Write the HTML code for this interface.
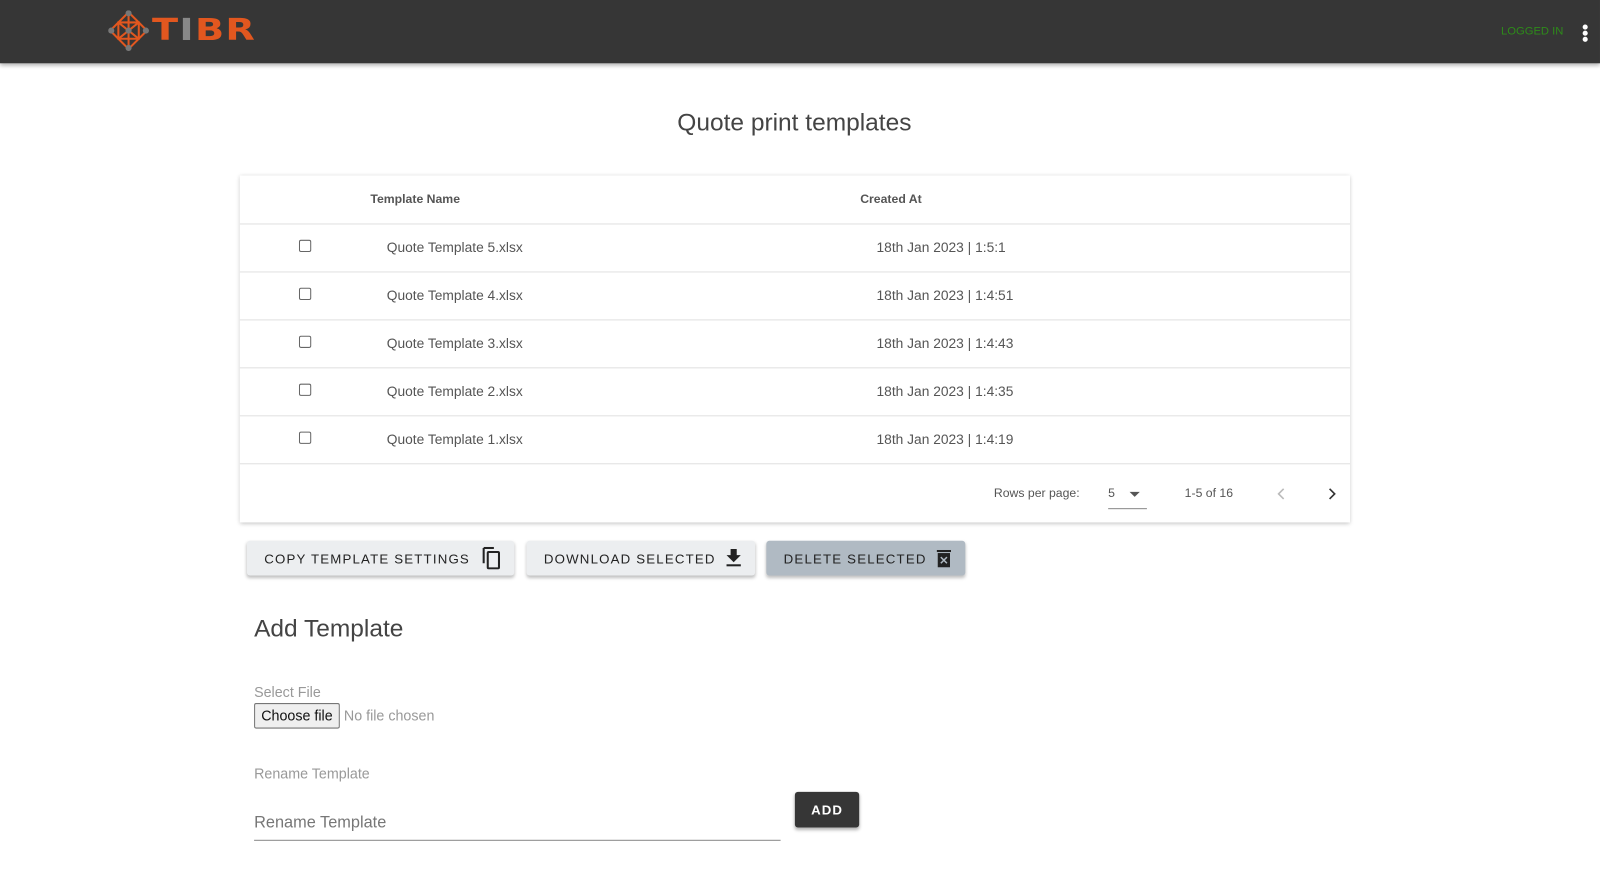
<!DOCTYPE html>
<html><head><meta charset="utf-8"><style>
*{box-sizing:border-box;margin:0;padding:0}
body{width:1600px;height:895px;background:#fff;font-family:"Liberation Sans",sans-serif;position:relative;overflow:hidden;color:#333}
#w{position:absolute;left:0;top:0;width:1568px;height:877px;transform:scale(1.0204);transform-origin:0 0}
.hdr{position:absolute;left:0;top:0;width:1568px;height:62px;background:#363636;box-shadow:0 2px 4px rgba(0,0,0,.3)}
.abs{position:absolute}
.card{position:absolute;left:235px;top:172px;width:1088px;height:340px;background:#fff;box-shadow:0 1px 4px rgba(0,0,0,.25)}
.row{position:absolute;left:0;width:1088px;height:47px;border-top:1px solid #e0e0e0;font-size:13.5px;color:#555}
.row .cb{position:absolute;left:58px;top:15px;width:12px;height:12px;border:1px solid #666;border-radius:2px}
.row .n{position:absolute;left:144px;top:15px}
.row .d{position:absolute;left:624px;top:15px}
.btn{position:absolute;top:530px;height:34px;background:#eceef0;box-shadow:0 2px 3px rgba(0,0,0,.25);border-radius:3px;font-size:13px;letter-spacing:1.15px;color:#222;display:flex;align-items:center;padding-left:17px}
.btn svg{margin-left:10px}
</style></head><body><div id="w">
<div class="hdr">
<svg class="abs" style="left:106px;top:10px" width="42" height="40" viewBox="0 0 42 40"><g stroke="#e2571f" stroke-width="2" fill="none"><path d="M20 2L38 20L20 38L2 20Z"/><path d="M10 12L30 12L30 28L10 28Z"/><path d="M10 12L30 28M30 12L10 28M20 2L20 38"/></g><g fill="#777"><circle cx="20" cy="3" r="3"/><circle cx="37" cy="20" r="3"/><circle cx="20" cy="37" r="3"/><circle cx="3" cy="20" r="3"/><circle cx="20" cy="20" r="3"/></g></svg>
<div class="abs" style="left:149px;top:12px;font-size:30px;font-weight:bold;color:#e2571f;letter-spacing:1px;transform:scaleX(1.25);transform-origin:0 0;font-family:'DejaVu Sans',sans-serif">T<span style="color:#888">I</span>BR</div>
<div class="abs" style="left:1471px;top:25px;font-size:11px;color:#2e8b1a">LOGGED IN</div>
<div class="abs" style="left:1551px;top:24px;width:5px;height:5px;border-radius:50%;background:#fff;box-shadow:0 6px 0 #fff,0 12px 0 #fff"></div>
</div>
<div class="abs" style="left:0;width:1557px;top:107px;text-align:center;font-size:24px;color:#444">Quote print templates</div>
<div class="card">
<div class="abs" style="left:128px;top:16px;font-size:12px;font-weight:bold;color:#555">Template Name</div>
<div class="abs" style="left:608px;top:16px;font-size:12px;font-weight:bold;color:#555">Created At</div>
<div class="row" style="top:47px"><div class="cb"></div><div class="n">Quote Template 5.xlsx</div><div class="d">18th Jan 2023 | 1:5:1</div></div>
<div class="row" style="top:94px"><div class="cb"></div><div class="n">Quote Template 4.xlsx</div><div class="d">18th Jan 2023 | 1:4:51</div></div>
<div class="row" style="top:141px"><div class="cb"></div><div class="n">Quote Template 3.xlsx</div><div class="d">18th Jan 2023 | 1:4:43</div></div>
<div class="row" style="top:188px"><div class="cb"></div><div class="n">Quote Template 2.xlsx</div><div class="d">18th Jan 2023 | 1:4:35</div></div>
<div class="row" style="top:235px"><div class="cb"></div><div class="n">Quote Template 1.xlsx</div><div class="d">18th Jan 2023 | 1:4:19</div></div>
<div class="row" style="top:282px;height:58px;font-size:12px">
<div class="abs" style="left:739px;top:21px">Rows per page:</div>
<div class="abs" style="left:851px;top:21px">5</div>
<div class="abs" style="left:872px;top:27px;border-left:5px solid transparent;border-right:5px solid transparent;border-top:5px solid #555"></div>
<div class="abs" style="left:851px;top:43px;width:38px;border-top:1px solid #888"></div>
<div class="abs" style="left:926px;top:21px">1-5 of 16</div>
<svg class="abs" style="left:1016px;top:22px" width="10" height="14" viewBox="0 0 10 14"><path d="M7 2L2 7L7 12" stroke="#bbb" stroke-width="1.6" fill="none"/></svg>
<svg class="abs" style="left:1065px;top:22px" width="10" height="14" viewBox="0 0 10 14"><path d="M3 2L8 7L3 12" stroke="#333" stroke-width="1.6" fill="none"/></svg>
</div>
</div>
<div class="btn" style="left:242px;width:262px">COPY TEMPLATE SETTINGS<svg width="20" height="22" viewBox="0 0 20 22"><path d="M3 1H13M3 1V16" stroke="#222" stroke-width="2" fill="none"/><rect x="7" y="5" width="11" height="16" rx="1" stroke="#222" stroke-width="2" fill="none"/></svg></div>
<div class="btn" style="left:516px;width:224px">DOWNLOAD SELECTED<svg width="16" height="18" viewBox="0 0 16 18"><path d="M5 0H11V6H15L8 13L1 6H5Z" fill="#222"/><rect x="1" y="15" width="14" height="2" fill="#222"/></svg></div>
<div class="btn" style="left:751px;width:195px;background:#b0bac3">DELETE SELECTED<svg width="14" height="18" viewBox="0 0 14 18"><rect x="0" y="1" width="14" height="2" fill="#222"/><rect x="1" y="4" width="12" height="14" fill="#222"/><path d="M4 8L10 14M10 8L4 14" stroke="#b0bac3" stroke-width="1.5"/></svg></div>
<div class="abs" style="left:249px;top:603px;font-size:24px;color:#444">Add Template</div>
<div class="abs" style="left:249px;top:670px;font-size:14px;color:#999">Select File</div>
<div class="abs" style="left:249px;top:689px;width:84px;height:25px;border:1px solid #767676;border-radius:2px;background:#efefef;font-size:14px;color:#111;text-align:center;line-height:23px">Choose file</div>
<div class="abs" style="left:337px;top:693px;font-size:14px;color:#999">No file chosen</div>
<div class="abs" style="left:249px;top:750px;font-size:14px;color:#999">Rename Template</div>
<div class="abs" style="left:249px;top:798px;font-size:16px;color:#777">Rename Template</div>
<div class="abs" style="left:249px;top:823px;width:516px;border-top:1px solid #888"></div>
<div class="abs" style="left:779px;top:776px;width:63px;height:35px;background:#363636;border-radius:3px;color:#fff;font-weight:bold;font-size:13px;letter-spacing:1px;text-align:center;line-height:35px;box-shadow:0 2px 3px rgba(0,0,0,.3)">ADD</div>
</div></body></html>
